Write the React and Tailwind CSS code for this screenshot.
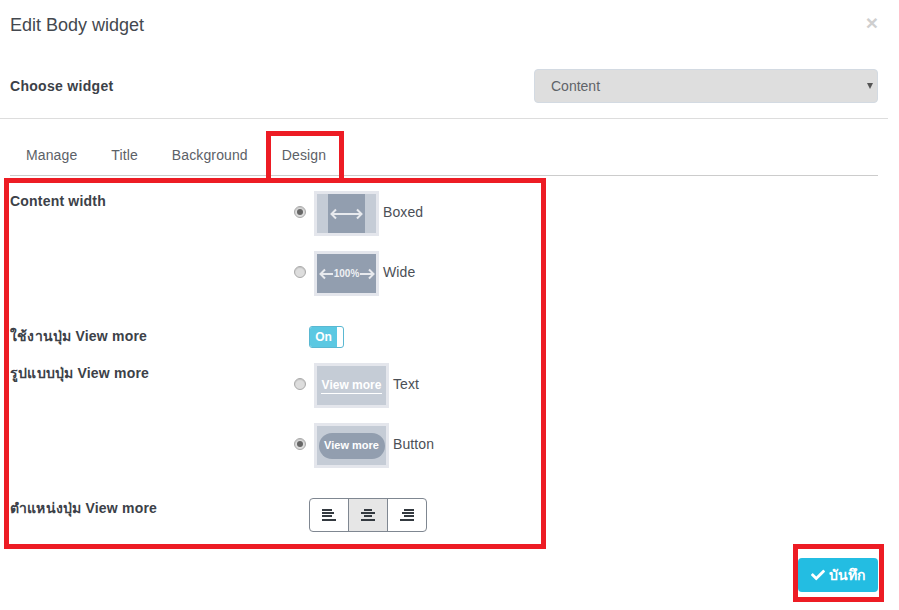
import React from 'react';
import { FaCheck } from 'react-icons/fa';

const font = { fontFamily: '"Liberation Sans", "Noto Sans", "DejaVu Sans", sans-serif' };

const labelClass = 'text-sm font-bold tracking-[0.2px] leading-[20px]';

const Frame = ({ className }) => (
  <div className={`absolute border-[5px] border-[#ed1c24] pointer-events-none ${className}`}></div>
);

const Radio = ({ checked }) => (
  <span className="w-3 h-3 -mt-[3px] rounded-full border border-[#aaaaaa] bg-[#dddddd] flex items-center justify-center shrink-0 shadow-[inset_0_1px_1px_rgba(0,0,0,0.12)]">
    {checked && <span className="w-1.5 h-1.5 rounded-full bg-[#666666]"></span>}
  </span>
);

const Thumb = ({ children, className }) => (
  <div className={`h-[45px] bg-[#e4e6ec] p-[3px] shrink-0 ${className}`}>{children}</div>
);

const Arrow = ({ width, className }) => (
  <svg width={width} height="12" viewBox={`0 0 ${width} 12`} className={className} fill="none" stroke="#e8eaee" strokeWidth="2">
    <path d={`M1 6h${width - 2}M6 1.5 1.5 6 6 10.500M${width - 6} 1.500 ${width - 1.5} 6 ${width - 6} 10.500`} />
  </svg>
);

const AlignIcon = ({ align }) => {
  const widths = align === 'center' ? [8, 14, 8, 14] : [10, 12, 10, 14];
  return (
    <svg width="14" height="12" viewBox="0 0 14 12" fill="#343a40">
      {widths.map((w, i) => {
        const x = align === 'left' ? 0 : align === 'right' ? 14 - w : (14 - w) / 2;
        return <rect key={i} x={x} y={i * 3 + (i === 3 ? 1 : 0)} width={w} height="2" />;
      })}
    </svg>
  );
};

const Option = ({ checked, label, thumb }) => (
  <div className="flex items-center">
    <Radio checked={checked} />
    <div className="ml-2">{thumb}</div>
    <span className="ml-1 text-sm tracking-[0.1px] text-[#4b4f56] -mt-[4px]">{label}</span>
  </div>
);

const App = () => {
  return (
    <div className="relative w-[899px] h-[610px] bg-white overflow-hidden text-[#3c4148]" style={font}>
      <div className="w-[888px]">
        {/* Header */}
        <div className="h-[50px] pl-2.5 pr-[10px] flex items-center justify-between">
          <h4 className="text-lg text-[#44484f]">Edit Body widget</h4>
          <span className="text-[#cfcfcf] text-[21px] font-bold leading-none -mt-[6px]">×</span>
        </div>

        {/* Choose widget */}
        <div className="h-[69px] pl-2.5 pr-[10px] pt-[19px] border-b border-[#dddddd] flex items-start justify-between">
          <label className={`${labelClass} tracking-[0.3px] mt-[7px]`}>Choose widget</label>
          <div className="relative w-[344px] h-[34px] bg-[#dedede] border border-[#d3dae2] rounded flex items-center pl-4 text-sm text-[#5f6368]">
            Content
            <span className="absolute right-[4px] top-[13px] w-0 h-0 border-x-[3px] border-x-transparent border-t-[6px] border-t-[#555555]"></span>
          </div>
        </div>

        {/* Tabs */}
        <div className="ml-2.5 mr-[10px] mt-[16px] h-[41px] border-b border-[#cccccc] flex text-sm tracking-[0.12px] text-[#5c6167]">
          <a className="px-4 pt-[10px]">Manage</a>
          <a className="ml-[2px] px-4 pt-[10px]">Title</a>
          <a className="ml-[2px] px-4 pt-[10px]">Background</a>
          <a className="ml-[2px] px-4 pt-[10px]">Design</a>
        </div>

        {/* Design tab */}
        <div className="pl-2.5 pt-[15px]">
          <div className="flex h-[120px]">
            <label className={`w-[284px] ${labelClass}`}>Content width</label>
            <div className="flex flex-col gap-[15px]">
              <Option
                checked
                label="Boxed"
                thumb={
                  <Thumb className="w-[65px]">
                    <div className="h-full bg-[#c5ccd6] flex justify-center">
                      <div className="w-[37px] h-full bg-[#929eaf] flex items-center justify-center">
                        <Arrow width={33} />
                      </div>
                    </div>
                  </Thumb>
                }
              />
              <Option
                label="Wide"
                thumb={
                  <Thumb className="w-[65px]">
                    <div className="relative h-full bg-[#929eaf] flex items-center justify-center">
                      <Arrow width={56} />
                      <span className="absolute inset-0 flex items-center justify-center">
                        <span className="bg-[#929eaf] px-[1px] text-[10px] font-bold text-[#eef0f3]">100%</span>
                      </span>
                    </div>
                  </Thumb>
                }
              />
            </div>
          </div>

          <div className="flex h-[37px] mt-[15px]">
            <label className={`w-[299px] ${labelClass}`}>ใช้งานปุ่ม View more</label>
            <div className="w-[35px] h-[22px] rounded-[3px] border border-[#5ab8d2] bg-white flex overflow-hidden">
              <span className="w-[27px] bg-[#5bc8e2] text-white text-xs font-bold flex items-center justify-center">On</span>
            </div>
          </div>

          <div className="flex h-[135px]">
            <label className={`w-[284px] ${labelClass}`}>รูปแบบปุ่ม View more</label>
            <div className="flex flex-col gap-[15px]">
              <Option
                label="Text"
                thumb={
                  <Thumb className="w-[75px]">
                    <div className="h-full bg-[#c5ccd6] flex flex-col items-center justify-center">
                      <span className="text-xs font-bold text-white leading-[15px] border-b border-white px-[1px]">View more</span>
                    </div>
                  </Thumb>
                }
              />
              <Option
                checked
                label="Button"
                thumb={
                  <Thumb className="w-[75px]">
                    <div className="h-full bg-[#c5ccd6] flex items-center justify-center">
                      <span className="w-[66px] h-[26px] rounded-[13px] bg-[#929eaf] text-[11px] font-bold text-white flex items-center justify-center">View more</span>
                    </div>
                  </Thumb>
                }
              />
            </div>
          </div>

          <div className="flex">
            <label className={`w-[299px] ${labelClass}`}>ตำแหน่งปุ่ม View more</label>
            <div className="w-[118px] h-[34px] border border-[#7f8791] rounded flex overflow-hidden">
              <span className="flex-1 flex items-center justify-center">
                <AlignIcon align="left" />
              </span>
              <span className="flex-1 flex items-center justify-center bg-[#e6e6e6] border-x border-[#7f8791]">
                <AlignIcon align="center" />
              </span>
              <span className="flex-1 flex items-center justify-center">
                <AlignIcon align="right" />
              </span>
            </div>
          </div>
        </div>

        {/* Footer */}
        <div className="flex justify-end pr-[10px] mt-[26px]">
          <button className="w-20 h-[34px] rounded bg-[#23bde2] text-white text-sm font-bold flex items-center justify-center gap-[4px]">
            <FaCheck className="w-3.5 h-3.5" />
            บันทึก
          </button>
        </div>
      </div>

      {/* Red annotation frames */}
      <Frame className="left-[4px] top-[178px] w-[542px] h-[371px]" />
      <Frame className="left-[266px] top-[131px] w-[78px] h-[52px] border-b-0" />
      <Frame className="left-[793px] top-[544px] w-[91px] h-[58px]" />
    </div>
  );
};

export default App;
